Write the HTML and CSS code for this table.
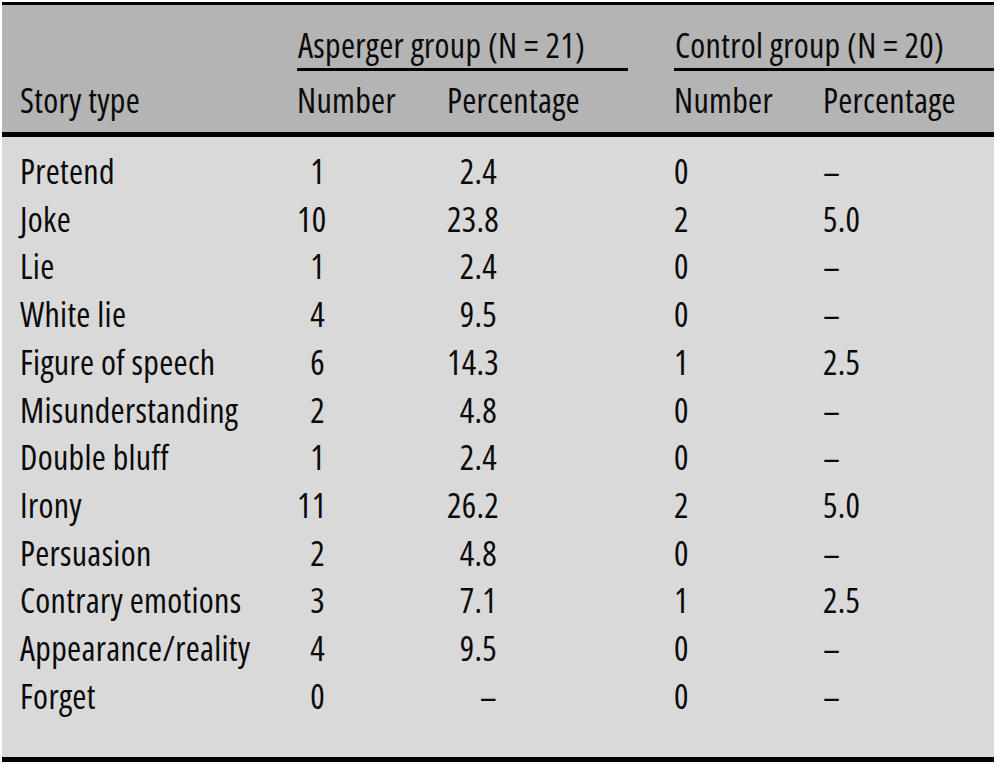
FILE: index.html
```
<!DOCTYPE html>
<html lang="en">
<head>
<meta charset="utf-8">
<title>Story types</title>
<link rel="stylesheet" href="styles.css">
</head>
<body>
<div class="table">
  <div class="head">
    <div class="group group-asp">Asperger group (N = 21)</div>
    <div class="group group-ctl">Control group (N = 20)</div>
    <div class="sub c1">Story type</div>
    <div class="sub c2">Number</div>
    <div class="sub c3">Percentage</div>
    <div class="sub c4">Number</div>
    <div class="sub c5">Percentage</div>
  </div>
  <div class="body">
    <div class="row"><div class="c1">Pretend</div><div class="c2"><span class="an">1</span></div><div class="c3"><span class="ap">2.4</span></div><div class="c4">0</div><div class="c5">–</div></div>
    <div class="row"><div class="c1">Joke</div><div class="c2"><span class="an">10</span></div><div class="c3"><span class="ap">23.8</span></div><div class="c4">2</div><div class="c5">5.0</div></div>
    <div class="row"><div class="c1">Lie</div><div class="c2"><span class="an">1</span></div><div class="c3"><span class="ap">2.4</span></div><div class="c4">0</div><div class="c5">–</div></div>
    <div class="row"><div class="c1">White lie</div><div class="c2"><span class="an">4</span></div><div class="c3"><span class="ap">9.5</span></div><div class="c4">0</div><div class="c5">–</div></div>
    <div class="row"><div class="c1">Figure of speech</div><div class="c2"><span class="an">6</span></div><div class="c3"><span class="ap">14.3</span></div><div class="c4">1</div><div class="c5">2.5</div></div>
    <div class="row"><div class="c1">Misunderstanding</div><div class="c2"><span class="an">2</span></div><div class="c3"><span class="ap">4.8</span></div><div class="c4">0</div><div class="c5">–</div></div>
    <div class="row"><div class="c1">Double bluff</div><div class="c2"><span class="an">1</span></div><div class="c3"><span class="ap">2.4</span></div><div class="c4">0</div><div class="c5">–</div></div>
    <div class="row"><div class="c1">Irony</div><div class="c2"><span class="an">11</span></div><div class="c3"><span class="ap">26.2</span></div><div class="c4">2</div><div class="c5">5.0</div></div>
    <div class="row"><div class="c1">Persuasion</div><div class="c2"><span class="an">2</span></div><div class="c3"><span class="ap">4.8</span></div><div class="c4">0</div><div class="c5">–</div></div>
    <div class="row"><div class="c1">Contrary emotions</div><div class="c2"><span class="an">3</span></div><div class="c3"><span class="ap">7.1</span></div><div class="c4">1</div><div class="c5">2.5</div></div>
    <div class="row"><div class="c1">Appearance/reality</div><div class="c2"><span class="an">4</span></div><div class="c3"><span class="ap">9.5</span></div><div class="c4">0</div><div class="c5">–</div></div>
    <div class="row"><div class="c1">Forget</div><div class="c2"><span class="an">0</span></div><div class="c3"><span class="ap">–</span></div><div class="c4">0</div><div class="c5">–</div></div>
  </div>
</div>
</body>
</html>
```
FILE: styles.css
```
html, body {
  margin: 0;
  padding: 0;
  background: #ffffff;
}

.table {
  margin: 2px 0 0 2px;
  width: 992px;
  font-family: "Open Sans", "Roboto Condensed", "Liberation Sans", sans-serif;
  font-stretch: 75%;
  font-size: 34px;
  letter-spacing: 0.3px;
  color: #0a0a0a;
  border-top: 3px solid #000;
  border-bottom: 5px solid #000;
}

.head,
.row {
  display: grid;
  grid-template-columns: 295px 150px 227px 149px 171px;
}

.head {
  background: #b4b4b4;
  border-bottom: 5px solid #000;
  line-height: 40px;
}

.group {
  padding-top: 20px;
  padding-bottom: 3px;
  border-bottom: 3px solid #000;
  white-space: nowrap;
}

.group-asp {
  grid-column: 2 / 4;
  margin-right: 46px;
  padding-left: 1px;
}

.group-ctl {
  grid-column: 4 / 6;
  padding-left: 1px;
}

.sub {
  grid-row: 2;
  padding-top: 9px;
  padding-bottom: 12px;
  white-space: nowrap;
}

.head .c1 {
  grid-column: 1;
}

.c1 {
  padding-left: 18px;
  white-space: nowrap;
}

.body {
  background: #d9d9d9;
  padding: 11px 0 36.6px;
}

.row {
  line-height: 47.7px;
  white-space: nowrap;
}

.an {
  display: inline-block;
  width: 28px;
  text-align: right;
}

.ap {
  display: inline-block;
  width: 50px;
  text-align: right;
}
```
